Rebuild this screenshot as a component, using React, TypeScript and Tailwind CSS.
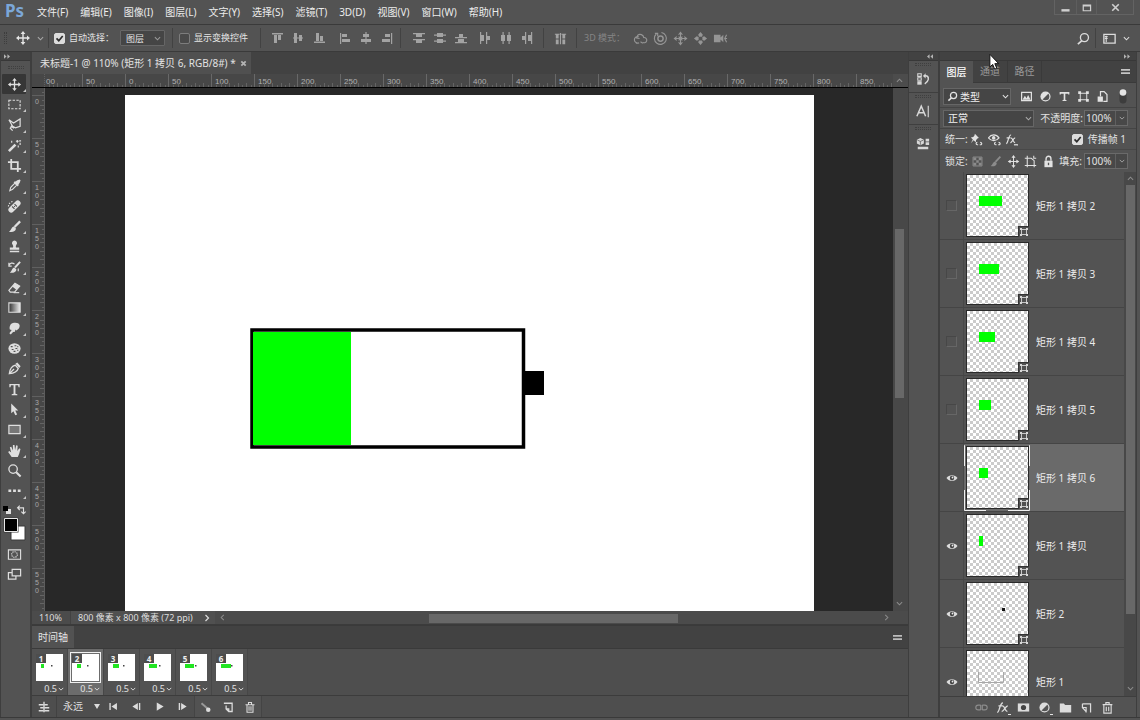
import React, { ReactNode } from "react";

function Ico({ children, className = "size-4" }: { children: ReactNode; className?: string }) {
  return (
    <svg viewBox="0 0 16 16" className={`shrink-0 ${className}`} fill="none" stroke="currentColor" strokeWidth="1.2" aria-hidden="true">
      {children}
    </svg>
  );
}

const F = { fill: "currentColor", stroke: "none" };

function Chevron({ className = "size-[7px]" }: { className?: string }) {
  return (
    <svg viewBox="0 0 8 8" className={`pointer-events-none shrink-0 ${className}`} fill="none" stroke="currentColor" strokeWidth="1.2" aria-hidden="true">
      <path d="M1 2.5 4 5.5 7 2.5" />
    </svg>
  );
}

function MoveIcon() {
  return (
    <Ico>
      <path d="M8 3v10M3 8h10" strokeWidth="1.4" />
      <path {...F} d="M8 1l2.4 3H5.600zM8 15l2.400-3H5.600zM1 8l3-2.400v4.800zM15 8l-3-2.400v4.800z" />
    </Ico>
  );
}

const menus = ["文件(F)", "编辑(E)", "图像(I)", "图层(L)", "文字(Y)", "选择(S)", "滤镜(T)", "3D(D)", "视图(V)", "窗口(W)", "帮助(H)"];

function MenuBar() {
  return (
    <header className="flex h-[25px] shrink-0 items-start border-b border-[#3a3a3a] pl-[5px] pr-[6px]">
      <span className="w-8 text-[17px] leading-[22px] font-bold text-[#7ba7d8]">Ps</span>
      <nav className="flex h-6 items-center gap-3 text-[10px] text-[#ececec]">
        {menus.map((m) => (
          <button key={m} className="whitespace-nowrap">{m}</button>
        ))}
      </nav>
      <div className="ml-auto flex h-[15px] border border-t-0 border-[#636363] text-[#cfcfcf]">
        <button aria-label="Minimize" className="flex w-[22px] items-center justify-center border-r border-[#5e5e5e]">
          <Ico className="size-[13px]"><path {...F} d="M3 10h10v3H3z" /></Ico>
        </button>
        <button aria-label="Maximize" className="flex w-5 items-center justify-center border-r border-[#5e5e5e]">
          <Ico className="size-[13px]"><path d="M4 5h9v7H4zM4 6h9" strokeWidth="1.5" /></Ico>
        </button>
        <button aria-label="Close" className="flex w-9 items-center justify-center">
          <Ico className="size-[13px]"><path d="M4 4l8 8M12 4l-8 8" strokeWidth="2" /></Ico>
        </button>
      </div>
    </header>
  );
}

function Check({ id, checked }: { id: string; checked?: boolean }) {
  return (
    <span className="relative flex size-[11px] shrink-0">
      <input id={id} type="checkbox" defaultChecked={checked} className="peer size-[11px] appearance-none rounded-[2px] border border-[#7d7d7d] bg-[#4a4a4a] checked:border-[#dcdcdc] checked:bg-[#dcdcdc]" />
      <svg viewBox="0 0 11 11" className="pointer-events-none absolute inset-0 hidden size-[11px] peer-checked:block" fill="none" stroke="#2c2c2c" strokeWidth="1.7" aria-hidden="true">
        <path d="M2.500 5.300 4.800 7.700 8.700 3" />
      </svg>
    </span>
  );
}

const Sep = ({ className = "" }: { className?: string }) => <i className={`h-5 w-px shrink-0 bg-[#424242] ${className}`} />;

const alignGroups: { label: string; art: ReactNode }[][] = [
  [
    { label: "Align top edges", art: <path {...F} d="M3 3h11v1.500H3zM5 5h3v8H5zM9 5h3v5H9z" /> },
    { label: "Align vertical centers", art: <path {...F} d="M4 3h3v10H4zM9 5h3v6H9zM3 7.500h10v1H3z" /> },
    { label: "Align bottom edges", art: <path {...F} d="M3 11.500h11V13H3zM5 3h3v8H5zM9 6h3v5H9z" /> },
  ],
  [
    { label: "Align left edges", art: <path {...F} d="M3 3h1.200v11H3zM5 4h5v3H5zM5 9h8v3H5z" /> },
    { label: "Align horizontal centers", art: <path {...F} d="M7.400 2h1.200v12H7.400zM5 4h6v3H5zM3 9h10v3H3z" /> },
    { label: "Align right edges", art: <path {...F} d="M12 3h1.200v11H12zM6 4h5v3H6zM3 9h8v3H3z" /> },
  ],
  [
    { label: "Distribute top edges", art: <path {...F} d="M2 3h12v1.200H2zM5 4h6v3H5zM2 9h12v1.200H2zM5 10h6v3H5z" /> },
    { label: "Distribute vertical centers", art: <path {...F} d="M2 4.500h12v1.200H2zM5 3h6v4H5zM2 10.500h12v1.200H2zM5 9h6v4H5z" /> },
    { label: "Distribute bottom edges", art: <path {...F} d="M2 7h12v1.200H2zM6 4h4v3H6zM2 12h12v1.200H2zM5 9h6v3H5z" /> },
  ],
  [
    { label: "Distribute left edges", art: <path {...F} d="M3 2h1.200v12H3zM4 5h3v6H4zM9 2h1.200v12H9zM10 6h3v4h-3z" /> },
    { label: "Distribute horizontal centers", art: <path {...F} d="M4.500 2h1.200v12H4.500zM3 5h4v6H3zM10.500 2h1.200v12h-1.200zM9 5h4v6H9z" /> },
    { label: "Distribute right edges", art: <path {...F} d="M6 2h1.200v12H6zM3 6h3v4H3zM12 2h1.200v12H12zM9 5h3v6H9z" /> },
  ],
];

function AlignGroup({ items }: { items: { label: string; art: ReactNode }[] }) {
  return (
    <div className="flex gap-px">
      {items.map((b) => (
        <button key={b.label} aria-label={b.label} className="flex w-5 justify-center">
          <Ico className="size-4">{b.art}</Ico>
        </button>
      ))}
    </div>
  );
}

function OptionsBar() {
  return (
    <div className="flex h-[27px] shrink-0 items-center border-b border-[#3a3a3a] text-[9px] text-[#e4e4e4]">
      <i className="ml-1 h-3 w-[3px] border-x border-dotted border-[#3d3d3d]" />
      <button aria-label="Move tool" className="ml-2 flex items-center gap-1.5">
        <MoveIcon />
        <Chevron className="size-[7px] text-[#a8a8a8]" />
      </button>
      <Sep className="ml-1" />
      <span className="ml-[5px] flex"><Check id="auto-select" checked /></span>
      <label htmlFor="auto-select" className="ml-1 w-[50px] whitespace-nowrap">自动选择：</label>
      <span className="relative ml-px flex h-4 w-[45px] items-center">
        <select aria-label="自动选择" className="h-4 w-full appearance-none rounded-[1px] border border-[#666] bg-[#454545] pl-[5px] leading-none outline-none">
          <option>图层</option>
          <option>组</option>
        </select>
        <Chevron className="absolute right-1 size-[7px] text-[#999]" />
      </span>
      <Sep className="ml-[7px]" />
      <span className="ml-1.5 flex"><Check id="transform" /></span>
      <label htmlFor="transform" className="ml-1 w-[66px] whitespace-nowrap">显示变换控件</label>
      <Sep />
      <div className="ml-1.5 flex items-center text-[#a3a3a3]">
        <AlignGroup items={alignGroups[0]} />
        <span className="ml-1.5 flex"><AlignGroup items={alignGroups[1]} /></span>
        <Sep className="mr-2 ml-[3px]" />
        <AlignGroup items={alignGroups[2]} />
        <span className="ml-1 flex"><AlignGroup items={alignGroups[3]} /></span>
        <Sep className="mx-1.5" />
        <button aria-label="Auto-align layers" className="flex w-5 justify-center">
          <Ico className="size-[15px]"><path {...F} d="M3 4h3v4H3zM3 9h3v5H3zM10 4h3v4h-3zM10 9h3v5h-3zM7.400 2h1.200v12H7.400zM2 3h5v1H2zM9 3h5v1H9z" /></Ico>
        </button>
      </div>
      <Sep className="ml-1.5" />
      <span className="ml-[7px] w-[46px] whitespace-nowrap text-[#858585]">3D 模式：</span>
      <div className="flex text-[#959595]">
        <button aria-label="Rotate 3D" className="flex w-5 justify-center">
          <Ico className="size-[15px]"><path d="M5 4.500A4 4 0 0 1 11.500 7a2.800 2.800 0 1 1-1 5.200M8 11.500 10.500 13M6 6a3.500 3.500 0 1 0 .5 6.500M5 4.500 4 7.500 7 8M3 13h3" /></Ico>
        </button>
        <button aria-label="Roll 3D" className="flex w-5 justify-center">
          <Ico className="size-[15px]"><circle cx="8" cy="8" r="2.800" strokeWidth="1.600" /><path d="M3.500 3.200A6.400 6.400 0 1 0 9 1.600M2 2.500h3v3" /></Ico>
        </button>
        <button aria-label="Pan 3D" className="flex w-5 justify-center">
          <Ico className="size-[15px]"><path d="M8 2v12M2 8h12M6 4l2-2.500L10 4M6 12l2 2.500 2-2.500M4 6 1.500 8 4 10M12 6l2.500 2L12 10M6 6l4 4M10 6l-4 4" /></Ico>
        </button>
        <button aria-label="Slide 3D" className="flex w-5 justify-center">
          <Ico className="size-[15px]"><path {...F} d="M8 1l2.500 3-1 2h-3l-1-2zM8 15l2.500-3-1-2h-3l-1 2zM1 8l3-2.500 2 1v3l-2 1zM15 8l-3-2.500-2 1v3l2 1z" /></Ico>
        </button>
        <button aria-label="Zoom 3D" className="flex w-5 justify-center">
          <Ico className="size-[15px]"><path {...F} d="M1 4h7v8H1zM8 7l3-3v8L8 9z" /><path d="M14.500 4 12.500 8l2 4M12.500 8H15" /></Ico>
        </button>
      </div>
      <div className="ml-auto flex items-center pr-2.5 text-[#dcdcdc]">
        <button aria-label="Search"><Ico className="size-[15px]"><circle cx="9" cy="7" r="4.300" strokeWidth="1.400" /><path d="M6 10.500 2 14" strokeWidth="1.800" /></Ico></button>
        <Sep className="mr-1.5 ml-1" />
        <button aria-label="Workspace" className="flex items-center gap-1.5">
          <Ico className="size-[15px]"><path d="M2 3.500h12v9.500H2z" strokeWidth="1.400" /><path d="M4.500 5v7M3 6h3M3 8h3" /></Ico>
          <Chevron />
        </button>
      </div>
    </div>
  );
}

const tools: { label: string; art: ReactNode; plain?: boolean }[] = [
  { label: "Move", art: <><path d="M8 3v10M3 8h10" strokeWidth="1.400" /><path {...F} d="M8 1l2.400 3H5.600zM8 15l2.400-3H5.600zM1 8l3-2.400v4.800zM15 8l-3-2.400v4.800z" /></> },
  { label: "Rectangular marquee", art: <path d="M2 3.500h12v9H2z" strokeDasharray="2.500 1.500" /> },
  { label: "Polygonal lasso", art: <path d="M2 3 7 6.500l7-4.500v8l-5 1.500-3-1.500L2 3M5.500 9.500 3.500 12l2.500 2.500M4 9.500l3.500 2.500" strokeWidth="1.300" /> },
  { label: "Magic wand", art: <><path d="M2 14 9 7" strokeWidth="2.800" /><path d="M11 2v3M9.500 3.500h3M14 5v2.500M5 3v2M12 8v2M13 3h2" /></> },
  { label: "Crop", art: <path d="M4.500 1v10.500H15M1 4.500h10.500V15" strokeWidth="1.900" /> },
  { label: "Eyedropper", art: <><path d="M3 13.500 4 10l4.500-4.500L10.500 7.500 6 12z" /><path {...F} d="M8 4.500 11 2.500 13.500 1.500 14.500 2.500 13.500 5 11.500 8z" /><path {...F} d="M7 4.500 8.500 3.500 12.500 7.500 11.500 9z" /></> },
  { label: "Healing brush", art: <><path d="M4.500 11.500 11.500 4.500" strokeWidth="6" strokeLinecap="round" /><path d="M5.500 8 8 10.500M8 5.500 10.500 8M7.500 8h1" stroke="#535353" /><path d="M1.500 8A6 6 0 0 1 7 2.500" strokeDasharray="1.500 1.300" /></> },
  { label: "Brush", art: <><path d="M14 2.500 8 8.500" strokeWidth="2.400" /><path {...F} d="M7.500 8 9.500 10C9.500 13 6 14.500 2 13.500 4.500 12.500 4.500 8.500 7.500 8z" /></> },
  { label: "Clone stamp", art: <path {...F} d="M8 1.500a2.700 2.700 0 0 1 2 4.500c-.7 1-.7 2-.4 3H13v2.500H3V9h3.400c.3-1 .3-2-.4-3A2.700 2.700 0 0 1 8 1.500zM3 12.500h10V14H3z" /> },
  { label: "History brush", art: <><path d="M14 2 8.500 8" strokeWidth="2" /><path {...F} d="M8 8l2 2c0 3-3.500 4-7 3.500C5.500 12 5 8.500 8 8z" /><path d="M2 6c1-3 4-3.500 6-1.500M2 3v3.500h3M12 9v3" /></> },
  { label: "Eraser", art: <><path d="M2 11 8.500 3.500 13.500 6.500 8 13H3.500z" strokeWidth="1.300" /><path {...F} d="M8.500 3.500 13.500 6.500 10 10.500 5.500 7z" /><path d="M7 13.500h6" /></> },
  { label: "Gradient", art: <><defs><linearGradient id="tool-grad"><stop offset="0" stopColor="#303030" /><stop offset="1" stopColor="#eeeeee" /></linearGradient></defs><path d="M2 3h12v10H2z" fill="url(#tool-grad)" /></> },
  { label: "Smudge", art: <path {...F} d="M4 3.500C7 1 13 1.500 13.500 4.500c.3 3-1.500 4.500-3.500 5.500l-1-1-.5 2.500-2 .3L4 14.500 2.500 13 5 9.500 3 9c-.7-2 0-4 1-5.500z" /> },
  { label: "Sponge", art: <><ellipse cx="8" cy="8" rx="6.500" ry="5.500" {...F} /><path d="M4 6h2M8 5h2M5 9h2M9 8h2M7 11h2M11 6h1M11 10h1" stroke="#535353" /></> },
  { label: "Pen", art: <><path d="M2.500 13.500C3 9 5 5.500 9 4.500L12 8c-1 3-5 5-9.500 5.500zM2.500 13.500 7.500 8.500" strokeWidth="1.400" /><path {...F} d="M9 3l2-1.500 3.500 4L13 7.500z" /></> },
  { label: "Type", art: <path {...F} d="M2.500 2h11v3.500h-1.200L11.800 3.500H9v9l2 .5v1H5v-1l2-.5v-9H4.200l-.5 2H2.500z" /> },
  { label: "Path selection", art: <path {...F} d="M4.500 1.500 12 9H8.800l2 4.300-2 .9L6.900 9.800 4.500 12z" /> },
  { label: "Rectangle", art: <path d="M2 3.500h12v9H2z" fill="#777777" strokeWidth="1.300" /> },
  { label: "Hand", art: <path {...F} d="M5 15 1.200 9.500 2.500 8.500 4.500 10 3 4.500 4.600 4 6.300 8 6.300 2h1.700L8.600 7.500l1.200-5 1.600.4L11 8.500 13 5.500l1.400.8L13 11.500 11.500 15z" /> },
  { label: "Zoom", plain: true, art: <><circle cx="6.500" cy="6.500" r="4.500" strokeWidth="1.400" /><path d="M9.800 9.800 14.500 14.500" strokeWidth="2.200" /></> },
  { label: "Edit toolbar", art: <path {...F} d="M1.500 7h3v2.500h-3zM6.500 7h3v2.500h-3zM11.500 7h3v2.500h-3z" /> },
];

function CollapseMark({ right }: { right?: boolean }) {
  return (
    <svg viewBox="0 0 7 5" className="h-[5px] w-[6px]" fill="#b4b4b4" aria-hidden="true">
      {right ? <path d="M0 0 3 2.500 0 5zM4 0 7 2.500 4 5z" /> : <path d="M3 0 0 2.500 3 5zM7 0 4 2.500 7 5z" />}
    </svg>
  );
}

const Grip = () => <i className="mx-auto h-[3px] w-4 shrink-0 border-y border-dotted border-[#3f3f3f]" />;

function ToolBar() {
  return (
    <aside className="flex w-8 shrink-0 flex-col border-r-2 border-l border-[#3e3e3e] text-[#dedede]">
      <div className="flex h-[9px] shrink-0 items-center border-b border-[#383838] bg-[#424242] pl-[3px]"><CollapseMark right /></div>
      <div className="flex h-[13px] shrink-0 items-center"><Grip /></div>
      <div className="flex h-[427px] shrink-0 flex-col justify-between pr-[3px]">
        {tools.map((t, i) => (
          <button key={t.label} aria-label={t.label} className={`relative mx-auto flex h-5 w-6 items-center justify-center ${i === 0 ? "rounded-[1px] bg-[#363636]" : ""}`}>
            <Ico className="size-[15px]">{t.art}</Ico>
            {!t.plain && <svg viewBox="0 0 3 3" className="absolute right-0 bottom-[2px] size-[3px]" fill="#c4c4c4" aria-hidden="true"><path d="M3 0v3H0z" /></svg>}
          </button>
        ))}
      </div>
      <div className="mt-[3px] flex h-3 shrink-0 justify-between pr-1 pl-[2px]">
        <button aria-label="Default colors"><svg viewBox="0 0 8 8" className="size-2" aria-hidden="true"><path d="M3 3h5v5H3z" fill="#ddd" /><path d="M0 0h5v5H0z" fill="#000" /></svg></button>
        <button aria-label="Swap colors"><Ico className="size-2.5"><path d="M3 4.500h9V14M6 1 2.500 4.500 6 8M8.500 10.500 12 14l3.500-3.500" strokeWidth="1.800" /></Ico></button>
      </div>
      <button aria-label="Foreground and background colors" className="mt-px ml-[2px] h-6 w-6 shrink-0">
        <svg viewBox="0 0 24 24" className="size-6" aria-hidden="true">
          <path d="M8 9h14v14H8z" fill="#fff" stroke="#3a3a3a" />
          <path d="M.5.5h15v15H.5z" fill="#3a3a3a" />
          <path d="M1.500 1.500h13v13h-13z" fill="#000" stroke="#e8e8e8" />
        </svg>
      </button>
      <button aria-label="Quick mask" className="mt-[3px] flex h-5 shrink-0 items-center justify-center pr-[3px]"><Ico className="size-[15px]"><path d="M1.500 3h13v10h-13z" /><circle cx="8" cy="8" r="3" strokeDasharray="1.300 1" /></Ico></button>
      <button aria-label="Screen mode" className="flex h-5 shrink-0 items-center justify-center pr-[3px]"><Ico className="size-[15px]"><path d="M5.500 2.500h9v7h-9zM5.500 6H1.500v7h8V9.500" strokeWidth="1.300" /></Ico></button>
    </aside>
  );
}

const hMarks = ["", "50", "0", "50", "100", "150", "200", "250", "300", "350", "400", "450", "500", "550", "600", "650", "700", "750", "800", "850"];
const vMarks = ["", "0", "50", "100", "150", "200", "250", "300", "350", "400", "450", "500", "550"];
const ticks = [1, 2, 3, 4, 5, 6, 7, 8, 9];

function HRuler() {
  return (
    <div className="flex h-3.5 shrink-0 border-b border-black bg-[#474747] font-['Liberation_Sans',sans-serif]">
      <i className="w-[13px] shrink-0 border-r border-dotted border-[#606060]" />
      <div className="min-w-0 flex-1 overflow-hidden">
        <div className="-ml-1.5 flex">
          {hMarks.map((m, i) => (
            <span key={i} className={`relative h-[13px] w-[43px] shrink-0 border-l border-[#686868] text-[8px] leading-[15px] text-[#b0b0b0] ${i === 0 ? "pl-1.5" : "pl-[3px]"}`}>
              {i === 0 ? "00" : m}
              <svg viewBox="0 0 43 13" className="absolute inset-0 h-[13px] w-[43px]" stroke="#646464" aria-hidden="true">
                {ticks.map((t) => <path key={t} d={`M${Math.round(t * 4.3)}.5 ${t % 2 ? 11 : 9}V13`} />)}
              </svg>
            </span>
          ))}
        </div>
      </div>
      <span className="flex w-[15px] shrink-0 items-center bg-[#4c4c4c] pl-[3px] text-[#8c8c8c]"><Chevron className="size-[7px] rotate-180" /></span>
    </div>
  );
}

function VRuler() {
  return (
    <div className="w-[13px] shrink-0 overflow-hidden border-r border-[#5c5c5c] bg-[#474747] font-['Liberation_Sans',sans-serif]">
      <div className="-mt-9 flex flex-col">
        {vMarks.map((m, i) => (
          <span key={i} className="relative flex h-[43px] w-3 shrink-0 flex-col border-t border-[#606060] pt-[2px] pl-[3px] text-[7px] leading-[8px] text-[#a8a8a8]">
            {m.split("").map((c, k) => <b key={k} className="font-normal">{c}</b>)}
            <svg viewBox="0 0 12 43" className="absolute inset-0 h-[43px] w-3" stroke="#646464" aria-hidden="true">
              {ticks.map((t) => <path key={t} d={`M${t % 2 ? 10 : 8} ${Math.round(t * 4.3)}.5H12`} />)}
            </svg>
          </span>
        ))}
      </div>
    </div>
  );
}

function DocumentArea() {
  return (
    <>
      <div className="flex h-[22px] shrink-0 bg-[#424242]">
        <div className="flex items-center gap-1 bg-[#505050] pr-1 pl-2 text-[10px] text-[#e2e2e2]">
          <span className="whitespace-nowrap">未标题-1 @ 110% (矩形 1 拷贝 6, RGB/8#) *</span>
          <button aria-label="Close document"><Ico className="size-[7px] text-[#b4b4b4]"><path d="M3 3l10 10M13 3 3 13" strokeWidth="4" /></Ico></button>
        </div>
      </div>
      <HRuler />
      <div className="flex min-h-0 flex-1">
        <VRuler />
        <main className="min-w-0 flex-1 overflow-hidden bg-[#282828] pt-[7px] pl-20">
          <svg viewBox="0 0 689 689" className="block w-[689px] bg-white" role="img" aria-label="Battery">
            <path d="M127 235h271.500v117H127z" fill="#fff" stroke="#000" strokeWidth="3.500" />
            <path d="M128 237h98v113h-98z" fill="#00ff00" />
            <path d="M399 276h20v24h-20z" fill="#000" />
          </svg>
        </main>
        <div className="flex w-[15px] shrink-0 flex-col bg-[#484848] pl-[2px] text-[#8c8c8c]">
          <i className="h-[141px]" />
          <i className="h-[169px] w-[9px] shrink-0 bg-[#686868]" />
          <Chevron className="mt-auto mb-1 ml-px size-[7px]" />
        </div>
      </div>
      <div className="flex h-3.5 shrink-0 items-center border-b border-[#3b3b3b] bg-[#4b4b4b] text-[9px] text-[#dddddd]">
        <span className="w-[38px] pl-[7px]">110%</span>
        <span className="flex h-full flex-none items-center border-l border-[#424242] bg-[#505050] pl-[7px]">
          <span className="w-[125px] whitespace-nowrap">800 像素 x 800 像素 (72 ppi)</span>
          <button aria-label="Status options" className="w-3"><Chevron className="size-[8px] -rotate-90" /></button>
        </span>
        <Chevron className="ml-1 size-[7px] rotate-90 text-[#8c8c8c]" />
        <div className="grid h-2 min-w-0 flex-1 grid-cols-[203px_249px_1fr] items-center">
          <i />
          <i className="h-[9px] bg-[#686868]" />
        </div>
        <Chevron className="mr-[18px] size-[7px] -rotate-90 text-[#8c8c8c]" />
      </div>
    </>
  );
}

const frames = [3, 4, 6, 8, 9, 10];

function Timeline() {
  return (
    <section className="shrink-0">
      <div className="flex h-6 items-stretch border-y border-[#3a3a3a] bg-[#424242]">
        <h2 className="flex w-[42px] items-center justify-center bg-[#525252] text-[10px] font-normal text-[#e4e4e4]">时间轴</h2>
        <button aria-label="Timeline menu" className="mr-1.5 ml-auto text-[#bcbcbc]"><Ico className="size-[9px]"><path d="M0 5h16M0 11h16" strokeWidth="3" /></Ico></button>
      </div>
      <div className="flex h-[47px] border-b border-[#3c3c3c] bg-[#4e4e4e]">
        {frames.map((w, i) => (
          <div key={w} className={`flex w-9 shrink-0 flex-col items-center border-r border-[#474747] pt-[3px] ${i === 1 ? "bg-[#6c6c6c]" : "bg-[#525252]"}`}>
            <button aria-label={`Frame ${i + 1}`} className={`flex size-[31px] shrink-0 items-center justify-center border ${i === 1 ? "border-[#f0f0f0]" : "border-transparent"}`}>
              <span className="relative size-[27px] bg-white">
                <svg viewBox="0 0 27 27" className="absolute inset-0 size-[27px]" aria-hidden="true">
                  <path d={`M5 10h${w}v4H5z`} fill="#22e522" />
                  <path d="M15 11h1.500v1.500H15z" fill="#444" />
                </svg>
                <b className="absolute top-0 left-0 h-[9px] w-[10px] bg-[#4d4d4d] text-center text-[8px] leading-[9px] font-bold text-[#eee]">{i + 1}</b>
              </span>
            </button>
            <button className="flex items-center gap-px self-end pr-[3px] text-[9px] leading-[12px] text-[#e2e2e2]">0.5<Chevron className="size-[6px]" /></button>
          </div>
        ))}
      </div>
      <div className="flex h-[21px] items-center bg-[#4e4e4e] text-[10px] text-[#dcdcdc]">
        <button aria-label="Convert to video timeline" className="flex w-6 justify-center"><Ico className="size-3"><path d="M1 5h6M3 9h4M1 13h6M9 5h4M9 9h6M9 13h6M8 1v14" strokeWidth="1.800" /></Ico></button>
        <span className="relative flex h-full w-[46px] items-center border-l border-[#424242]">
          <select aria-label="Loop" className="h-5 w-full appearance-none bg-transparent pl-1.5 outline-none"><option>永远</option><option>一次</option></select>
          <svg viewBox="0 0 6 5" className="pointer-events-none absolute right-0.5 h-[5px] w-1.5" fill="currentColor" aria-hidden="true"><path d="M0 0h6L3 5z" /></svg>
        </span>
        <div className="flex">
          {[
            { label: "First frame", d: "M2 3h2v10H2zM13 3v10L5 8z" },
            { label: "Previous frame", d: "M10 3v10L2 8zM11.500 3h2v10h-2z" },
            { label: "Play", d: "M4 2v12l10-6z" },
            { label: "Next frame", d: "M2.500 3h2v10h-2zM6 3v10l8-5z" },
          ].map((b) => (
            <button key={b.label} aria-label={b.label} className="flex w-[23px] justify-center"><Ico className="size-[11px]"><path {...F} d={b.d} /></Ico></button>
          ))}
        </div>
        <div className="flex h-full items-center border-x border-[#444] bg-[#525252]">
          <button aria-label="Tween" className="flex w-[22px] justify-center"><Ico className="size-3"><path d="M2 3 10 10" strokeWidth="2.500" stroke="#999" /><circle cx="11" cy="11.500" r="3" {...F} /></Ico></button>
          <button aria-label="Duplicate frame" className="flex w-[22px] justify-center"><Ico className="size-3"><path d="M2.500 3h11v11H9L5.500 10.500V6M5.500 10.500H9V14" strokeWidth="1.700" /></Ico></button>
          <button aria-label="Delete frame" className="flex w-[22px] justify-center"><Ico className="size-3"><path d="M2 5h12M6 5V2h4v3M4 5v10h8V5M6.700 7v6M9.300 7v6" strokeWidth="1.400" /></Ico></button>
        </div>
      </div>
    </section>
  );
}

function Dock() {
  const items: { label: string; art: ReactNode }[] = [
    { label: "History", art: <><path d="M2 2h4v3H2zM2 6.500h4v3H2z" /><path {...F} d="M1.500 10.500h5v4h-5z" /><path d="M9 4.500c4-1 5.500 1 5 4-.5 2.500-2 4-4 5" strokeWidth="1.700" /><path {...F} d="M11 1.500v6L8 4.500z" /></> },
    { label: "Character", art: <><path d="M1 14 6 2.500 11 14M3 10h6" strokeWidth="1.700" /><path d="M14 2v13" strokeWidth="1.300" /></> },
    { label: "3D", art: <><path {...F} d="M5 1l4 2v4.500L5 9.500 1 7.500V3zM11 2h4v3h-4zM11 6h4v3h-4zM2 11h12v3H2z" /><path d="M1.500 3.500 5 5l3.500-1.500M5 5v4" stroke="#535353" strokeWidth=".8" /></> },
  ];
  return (
    <aside className="flex w-8 shrink-0 flex-col border-r-2 border-l border-[#3e3e3e] text-[#d8d8d8]">
      <div className="flex h-[9px] shrink-0 items-center justify-end border-b border-[#383838] bg-[#424242] pr-[5px]"><CollapseMark /></div>
      {items.map((it, i) => (
        <div key={it.label} className={`flex h-8 shrink-0 flex-col pt-[2px] pr-px ${i < 2 ? "border-b border-[#3f3f3f]" : ""}`}>
          <Grip />
          <button aria-label={it.label} className="flex flex-1 items-center justify-center"><Ico className="size-[14px]">{it.art}</Ico></button>
        </div>
      ))}
    </aside>
  );
}

const ShapeIcon = () => (
  <><path d="M4 4h8v8H4z" /><path {...F} d="M1.500 1.500h3.500v3.500H1.500zM11 1.500h3.500v3.500H11zM1.500 11h3.500v3.500H1.500zM11 11h3.500v3.500H11z" /></>
);

const layers: { name: string; on: boolean; w?: number; art?: ReactNode }[] = [
  { name: "矩形 1 拷贝 2", on: false, w: 23 },
  { name: "矩形 1 拷贝 3", on: false, w: 20 },
  { name: "矩形 1 拷贝 4", on: false, w: 16 },
  { name: "矩形 1 拷贝 5", on: false, w: 12 },
  { name: "矩形 1 拷贝 6", on: true, w: 9 },
  { name: "矩形 1 拷贝", on: true, w: 4 },
  { name: "矩形 2", on: true, art: <path d="M35 25h3v3h-3z" fill="#111" /> },
  { name: "矩形 1", on: true, art: <path d="M11.500 21v10.500h25V21" fill="none" stroke="#a8a8a8" /> },
];

function LayerRow({ layer }: { layer: (typeof layers)[number] }) {
  const selected = layer.name === "矩形 1 拷贝 6";
  return (
    <li className="flex h-[68px] shrink-0 border-b border-[#454545]">
      <button aria-label={`${layer.name} visibility`} className="flex w-6 shrink-0 items-center justify-center border-r border-[#484848] text-[#dcdcdc]">
        {layer.on ? (
          <svg viewBox="0 0 12 8" className="h-2 w-3" aria-hidden="true"><path d="M.5 4C3 .2 9 .2 11.500 4 9 7.800 3 7.800.5 4z" fill="#dedede" /><circle cx="6" cy="4" r="2.200" fill="#444" /><circle cx="6.500" cy="3.500" r=".9" fill="#eee" /></svg>
        ) : (
          <i className="size-[11px] border border-[#474747] border-r-[#666] border-b-[#666]" />
        )}
      </button>
      <div className={`flex flex-1 items-center gap-[6px] ${selected ? "bg-[#6a6a6a]" : ""}`}>
        <span className="relative flex size-[66px] shrink-0 items-center justify-center">
          {selected && (
            <svg viewBox="0 0 66 66" className="absolute inset-0 size-[66px]" fill="none" stroke="#f0f0f0" aria-hidden="true">
              <path d="M.5 21V.5H1M65 .5h.5V21M.5 45v20.500H22M44 65.500h21.500V45" />
            </svg>
          )}
          <span className="relative size-[63px] border border-[#2a2a2a] bg-[conic-gradient(#cbcbcb_25%,#fff_0_50%,#cbcbcb_0_75%,#fff_0)] bg-[length:6px_6px]">
            <svg viewBox="0 0 61 61" className="absolute inset-0 size-[61px]" aria-hidden="true">
              {layer.w ? <path d={`M12 21h${layer.w}v10h-${layer.w}z`} fill="#00ff00" /> : layer.art}
            </svg>
            <svg viewBox="0 0 11 11" className="absolute -right-px -bottom-px size-[11px]" aria-hidden="true">
              <path d="M0 0h11v11H0z" fill="#333" />
              <path d="M1 1h10v10H1z" fill="#505050" />
              <path d="M3.500 3.500h5v5h-5z" fill="none" stroke="#c8c8c8" />
              <path d="M2 2h2v2H2zM8 2h2v2H8zM2 8h2v2H2zM8 8h2v2H8z" fill="#d8d8d8" />
            </svg>
          </span>
        </span>
        <span className="pt-0.5 text-[10px] whitespace-nowrap text-[#ececec]">{layer.name}</span>
      </div>
    </li>
  );
}

function Percent({ id }: { id: string }) {
  return (
    <span className="flex h-4 w-11 shrink-0 items-center border border-[#6a6a6a] bg-[#484848]">
      <input id={id} defaultValue="100%" className="h-full w-[30px] min-w-0 bg-transparent pl-px text-[10px] outline-none" />
      <span className="flex h-full flex-1 items-center justify-center border-l border-[#606060]"><Chevron className="size-[6px] text-[#aaa]" /></span>
    </span>
  );
}

function IconRow({ items, className }: { items: { label: string; art: ReactNode; dim?: boolean; menu?: boolean }[]; className: string }) {
  return (
    <div className={`flex items-center justify-between ${className}`}>
      {items.map((b) => (
        <button key={b.label} aria-label={b.label} className={`relative ${b.dim ? "text-[#8c8c8c]" : ""}`}>
          <Ico className="size-[13px]">{b.art}</Ico>
          {b.menu && <i className="absolute -right-0.5 -bottom-px h-px w-[3px] bg-[#e4e4e4]" />}
        </button>
      ))}
    </div>
  );
}

const contrast = <><circle cx="8" cy="8" r="5.500" strokeWidth="1.500" /><path {...F} d="M12 4A5.600 5.600 0 0 0 4 12z" /></>;

function LayersPanel() {
  return (
    <aside className="flex w-[197px] shrink-0 flex-col border-r border-[#3e3e3e] text-[10px] text-[#e2e2e2]">
      <div className="flex h-[9px] shrink-0 items-center justify-end border-b border-[#383838] bg-[#424242] pr-1.5"><CollapseMark right /></div>
      <div role="tablist" className="flex h-[22px] shrink-0 items-stretch bg-[#424242]">
        <button role="tab" aria-selected="true" className="w-[33px] bg-[#535353] font-medium text-white">图层</button>
        <button role="tab" aria-selected="false" className="w-[35px] border-r border-b border-[#3a3a3a] text-[#999]">通道</button>
        <button role="tab" aria-selected="false" className="w-[34px] border-r border-b border-[#3a3a3a] text-[#999]">路径</button>
        <div className="flex flex-1 items-center justify-end border-b border-[#3a3a3a] pr-1.5">
          <button aria-label="Panel menu" className="text-[#c4c4c4]"><Ico className="size-[9px]"><path d="M0 5h16M0 11h16" strokeWidth="3" /></Ico></button>
        </div>
      </div>
      <div className="flex h-[25px] shrink-0 items-center border-b border-[#444] pt-[3px] pr-2 pl-[3px]">
        <span className="relative flex h-[17px] w-[68px] items-center">
          <Ico className="pointer-events-none absolute left-1 size-[11px]"><circle cx="9.500" cy="6.500" r="4.500" strokeWidth="1.800" /><path d="M6.500 10 2 14" strokeWidth="2.200" /></Ico>
          <select aria-label="Layer filter" className="h-full w-full appearance-none border border-[#666] bg-[#454545] pl-4 leading-none text-[#f0f0f0] outline-none"><option>类型</option><option>名称</option></select>
          <Chevron className="absolute right-0.5 size-[7px]" />
        </span>
        <IconRow
          className="ml-[9px] w-[89px]"
          items={[
            { label: "Filter pixel layers", art: <><path d="M2 3h12v10H2z" strokeWidth="1.500" /><path {...F} d="M3 12l3-5 2 3 2-4 3 6z" /></> },
            { label: "Filter adjustment layers", art: contrast },
            { label: "Filter type layers", art: <path {...F} d="M2 2.500h12v3h-1.500V4.500H9V12l1.500.5v1h-5v-1L7 12V4.500H3.500v1H2z" /> },
            { label: "Filter shape layers", art: <ShapeIcon /> },
            { label: "Filter smart objects", art: <><path d="M5.500 8V2H10l3.500 3.500V14H9" strokeWidth="1.500" /><path {...F} d="M2 8h6.500v6.500H2z" /></> },
          ]}
        />
        <button aria-label="Layer filtering" className="mr-px ml-auto">
          <svg viewBox="0 0 8 15" className="h-[15px] w-2" aria-hidden="true"><rect x=".5" y="3" width="7" height="11.500" rx="3.500" fill="#3d3d3d" /><circle cx="4" cy="3.500" r="3.300" fill="#e4e4e4" /></svg>
        </button>
      </div>
      <div className="flex h-[21px] shrink-0 items-center border-b border-[#444] pr-2 pl-[3px]">
        <span className="relative flex h-[17px] w-[91px] items-center">
          <select aria-label="Blend mode" className="h-full w-full appearance-none border border-[#666] bg-[#454545] pl-1 leading-none text-[#f0f0f0] outline-none"><option>正常</option><option>正片叠底</option></select>
          <Chevron className="absolute right-0.5 size-[7px] text-[#aaa]" />
        </span>
        <label htmlFor="opacity" className="mr-px ml-auto whitespace-nowrap">不透明度:</label>
        <Percent id="opacity" />
      </div>
      <div className="flex h-[21px] shrink-0 items-center border-b border-[#484848] pr-2.5 pl-[5px]">
        <span className="w-[25px]">统一:</span>
        <IconRow
          className="w-[48px]"
          items={[
            { label: "Unify position", art: <><path {...F} d="M6 1l5 5-1.500.5-2 2-.5 3L4.500 9 1 12.500 3.500 8 1 5.500l3-.5 1.500-2z" /><path d="M9 11.500c-2 0-2 3 0 3h1M12.500 11.500c2.500 0 2.500 3 .5 3h-1" strokeWidth="1.400" /></> },
            { label: "Unify visibility", art: <><path d="M.5 6C4 1 10 1 13.500 6 10 10.500 4 10.500.5 6z" strokeWidth="1.500" /><circle cx="7" cy="6" r="2.200" {...F} /><path d="M9.500 11.500c-2 0-2 3 0 3h1M13 11.500c2.500 0 2.500 3 .5 3h-1" strokeWidth="1.400" /></> },
            { label: "Unify style", art: <><path d="M1.500 13C4 13 4 2 7.500 2.500M2 6h4.500M7 6c3 0 3 6 5.500 6M12.500 6C10 6 9 12 6.500 12" strokeWidth="1.400" /><path d="M11 14.500h5" strokeWidth="1.500" /></> },
          ]}
        />
        <span className="ml-auto flex"><Check id="propagate" checked /></span>
        <label htmlFor="propagate" className="ml-[5px] whitespace-nowrap">传播帧 1</label>
      </div>
      <div className="flex h-[22px] shrink-0 items-center pr-2 pl-[5px]">
        <span className="w-[26px]">锁定:</span>
        <IconRow
          className="w-[84px]"
          items={[
            { label: "Lock transparency", dim: true, art: <><path d="M2.500 2.500h11v11h-11z" /><path {...F} d="M3 3h3.500v3.500H3zM9.500 3H13v3.500H9.500zM6.500 6.500h3v3h-3zM3 9.500h3.500V13H3zM9.500 9.500H13V13H9.500z" /></> },
            { label: "Lock pixels", dim: true, art: <><path d="M14 2 8 8.500" strokeWidth="2.200" /><path {...F} d="M7.500 8l2 2c0 3-3.500 4.500-7.500 3.500 2.500-1 2.500-5 5.500-5.500z" /></> },
            { label: "Lock position", art: <><path d="M8 2v12M2 8h12" /><path {...F} d="M8 0l2.500 3.500h-5zM8 16l2.500-3.500h-5zM1 8l3.500-2.500v5zM15 8l-3.500-2.500v5z" /></> },
            { label: "Lock artboard", art: <path d="M4 1v14M1 4h8l3.500 3V15M1 13h14M12 1v3h3" strokeWidth="1.300" /> },
            { label: "Lock all", art: <><path {...F} d="M3 7h10v8H3z" /><path d="M5 7V4.500a3 3 0 0 1 6 0V7" strokeWidth="1.700" /><path d="M8 9.500v3" stroke="#535353" strokeWidth="1.600" /></> },
          ]}
        />
        <label htmlFor="fill" className="mr-[2px] ml-auto whitespace-nowrap">填充:</label>
        <Percent id="fill" />
      </div>
      <div className="flex min-h-0 flex-1">
        <ul className="flex min-w-0 flex-1 flex-col overflow-hidden">
          {layers.map((l) => <LayerRow key={l.name} layer={l} />)}
        </ul>
        <div className="flex w-3 shrink-0 flex-col items-center bg-[#484848] text-[#8c8c8c]">
          <Chevron className="my-[3px] size-[7px] rotate-180" />
          <i className="h-[429px] w-[9px] shrink bg-[#686868]" />
          <Chevron className="mt-auto mb-1 size-[7px]" />
        </div>
      </div>
      <div className="flex h-[21px] shrink-0 items-center border-t border-[#3e3e3e] text-[#dcdcdc]">
        <IconRow
          className="ml-[35px] w-[139px]"
          items={[
            { label: "Link layers", dim: true, art: <path d="M7 5H4a3 3 0 0 0 0 6h3M9 5h3a3 3 0 0 1 0 6H9M7 5v6M9 5v6" strokeWidth="1.400" /> },
            { label: "Layer style", menu: true, art: <><path d="M1.500 14C4.500 14 4.500 2 8.500 2.500M3 6h5M8 6c3 0 3 7 6 7M14.500 6C11.500 6 10 13 7 13" strokeWidth="1.700" /></> },
            { label: "Add mask", art: <><path {...F} d="M1 3h14v10H1z" /><circle cx="8" cy="8" r="3.200" fill="#444" stroke="none" /></> },
            { label: "Adjustment layer", menu: true, art: contrast },
            { label: "New group", art: <path {...F} d="M1 3h5l1.500 2H15v9H1z" /> },
            { label: "New layer", art: <path d="M3 3.500h10V14M3 3.500V8h4.500v6M3 8l4.500 5" strokeWidth="1.500" /> },
            { label: "Delete layer", art: <path d="M2 4.500h12M6 4.500V2h4v2.500M3.500 4.500V15h9V4.500M6.500 7v5.500M9.500 7v5.500" strokeWidth="1.400" /> },
          ]}
        />
      </div>
    </aside>
  );
}

export default function App() {
  return (
    <div className="relative flex h-screen flex-col overflow-hidden bg-[#535353] font-['Noto_Sans','Noto_Sans_CJK_SC',sans-serif]">
      <MenuBar />
      <OptionsBar />
      <div className="flex min-h-0 flex-1 border-b border-[#3a3a3a] pr-[3px]">
        <ToolBar />
        <div className="flex min-w-0 flex-1 flex-col">
          <DocumentArea />
          <Timeline />
        </div>
        <Dock />
        <LayersPanel />
      </div>
      <div className="h-[2px] shrink-0" />
      <svg viewBox="0 0 10 16" className="pointer-events-none absolute top-[53px] right-[140px] h-[18px] w-[11px]" aria-hidden="true">
        <path d="M.8 1v11.500l2.600-2.300 1.700 4.300 2-.8-1.800-4.200h3.500z" fill="#fff" stroke="#111" strokeWidth=".9" />
      </svg>
    </div>
  );
}
